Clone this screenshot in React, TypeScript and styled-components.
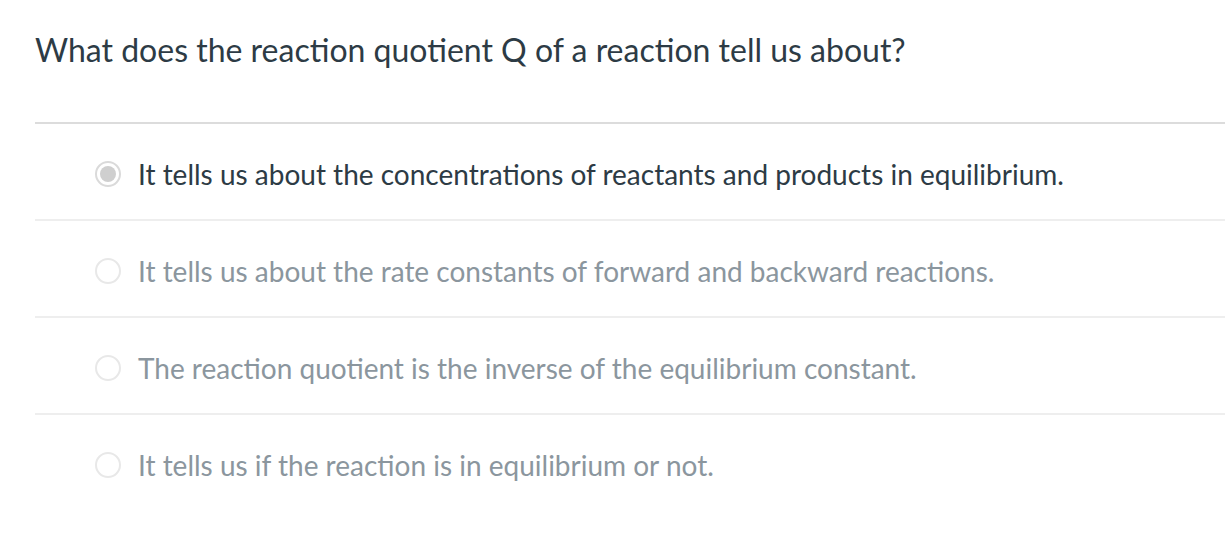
import styled, { createGlobalStyle } from 'styled-components';

const GlobalStyle = createGlobalStyle`
    html, body {
        margin: 0;
        padding: 0;
        background: #ffffff;
        font-family: Lato, "Open Sans", sans-serif;
    }
`

const QuestionBody = styled.div`
    padding: 30px 7px 0 35px;
`

const QuestionText = styled.h2`
    margin: 0 0 52px 0;
    font-size: 32px;
    line-height: 40px;
    font-weight: 400;
    color: #2d3b45;
`

const AnswerList = styled.div`
    border-top: 2px solid #dcdcdc;
`

const AnswerRow = styled.label<{ $last?: boolean }>`
    display: flex;
    align-items: center;
    height: 95px;
    padding-left: 60px;
    border-bottom: ${p => (p.$last ? 'none' : '2px solid #eeeeee')};
    cursor: pointer;
`

const Radio = styled.span<{ $checked?: boolean }>`
    position: relative;
    box-sizing: border-box;
    flex: none;
    width: 26px;
    height: 26px;
    margin-top: 4px;
    border-radius: 50%;
    border: 2px solid ${p => (p.$checked ? '#dadada' : '#e8e8e8')};
    background: #ffffff;

    &::after {
        content: '';
        display: ${p => (p.$checked ? 'block' : 'none')};
        position: absolute;
        left: 3px;
        top: 3px;
        width: 16px;
        height: 16px;
        border-radius: 50%;
        background: #cfcfcf;
    }
`

const AnswerText = styled.span<{ $checked?: boolean }>`
    margin-left: 17px;
    font-size: 28px;
    line-height: 34px;
    margin-top: 4px;
    color: ${p => (p.$checked ? '#2d3b45' : '#8b969e')};
`

const answers = [
    { text: 'It tells us about the concentrations of reactants and products in equilibrium.', checked: true },
    { text: 'It tells us about the rate constants of forward and backward reactions.', checked: false },
    { text: 'The reaction quotient is the inverse of the equilibrium constant.', checked: false },
    { text: 'It tells us if the reaction is in equilibrium or not.', checked: false },
]

const App = () => {
    return (
        <>
            <GlobalStyle />
            <QuestionBody>
                <QuestionText>What does the reaction quotient Q of a reaction tell us about?</QuestionText>
                <AnswerList>
                    {answers.map((a, i) => (
                        <AnswerRow key={i} $last={i === answers.length - 1}>
                            <Radio $checked={a.checked} />
                            <AnswerText $checked={a.checked}>{a.text}</AnswerText>
                        </AnswerRow>
                    ))}
                </AnswerList>
            </QuestionBody>
        </>
    );
}

export default App;
